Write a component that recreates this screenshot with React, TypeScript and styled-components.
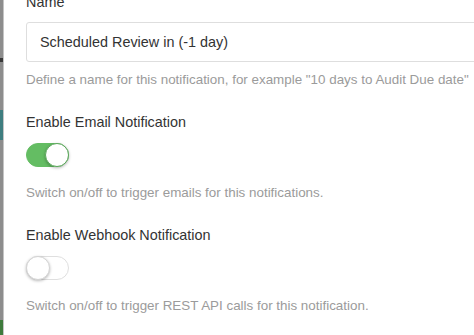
import styled, { createGlobalStyle } from "styled-components"

const GlobalStyle = createGlobalStyle`
    html, body {
        margin: 0;
        padding: 0;
        background: #ffffff;
        overflow: hidden;
    }
    body {
        font-family: "Liberation Sans", Arial, Helvetica, sans-serif;
        -webkit-font-smoothing: antialiased;
    }
`

const Page = styled.div`
    display: flex;
    width: 474px;
    height: 335px;
    overflow: hidden;
`

const Backdrop = styled.div`
    display: flex;
    flex-direction: column;
    width: 3px;
    flex-shrink: 0;
    background: #8d8d8d;
`

const BackdropPatch = styled.div<{ $h: number; $color: string }>`
    height: ${p => p.$h}px;
    flex-shrink: 0;
    background: ${p => p.$color};
`

const Modal = styled.div`
    flex: 1;
    min-width: 0;
    background: #ffffff;
    border-left: 1px solid #c4c4c4;
    padding: 0 0 0 22px;
`

const Form = styled.div`
    display: flex;
    flex-direction: column;
    width: 470px;
    margin-top: -8px;
`

const Group = styled.div`
    display: flex;
    flex-direction: column;
    align-items: flex-start;
    margin-bottom: 23px;
`

const Label = styled.label`
    font-size: 14.4px;
    line-height: 20px;
    color: #333333;
    margin-bottom: 10px;
`

const Input = styled.input`
    box-sizing: border-box;
    width: 100%;
    height: 40px;
    padding: 0 13px;
    border: 1px solid #dedede;
    border-radius: 3px;
    font-family: inherit;
    font-size: 14.4px;
    color: #333333;
    background: #ffffff;
    outline: none;
`

const Help = styled.span<{ $gap: number }>`
    display: block;
    margin-top: ${p => p.$gap}px;
    font-size: 13.4px;
    line-height: 18px;
    color: #9b9b9b;
    white-space: nowrap;
`

const Switch = styled.span<{ $on: boolean }>`
    position: relative;
    display: inline-block;
    box-sizing: border-box;
    width: 43px;
    height: 24px;
    margin-top: 1px;
    border-radius: 12px;
    border: 1px solid ${p => (p.$on ? "#64bd63" : "#dfdfdf")};
    background: ${p => (p.$on ? "#64bd63" : "#ffffff")};
`

const Knob = styled.span<{ $on: boolean }>`
    position: absolute;
    top: -1px;
    left: ${p => (p.$on ? "18px" : "-1px")};
    box-sizing: border-box;
    width: 24px;
    height: 24px;
    border-radius: 50%;
    background: #ffffff;
    border: 1px solid ${p => (p.$on ? "#5aa85a" : "#d4d4d4")};
    box-shadow: 0 1px 3px rgba(0, 0, 0, 0.28);
`

const Toggle = ({ on }: { on: boolean }): JSX.Element => (
    <Switch $on={on}>
        <Knob $on={on} />
    </Switch>
)

const App = (): JSX.Element => {
    return (
        <>
            <GlobalStyle />
            <Page>
                <Backdrop>
                    <BackdropPatch $h={58} $color="#8d8d8d" />
                    <BackdropPatch $h={4} $color="#3a3a3a" />
                    <BackdropPatch $h={48} $color="#8d8d8d" />
                    <BackdropPatch $h={30} $color="#3f7e80" />
                    <BackdropPatch $h={180} $color="#8d8d8d" />
                    <BackdropPatch $h={15} $color="#3e7b3c" />
                </Backdrop>
                <Modal>
                    <Form>
                        <Group>
                            <Label>Name</Label>
                            <Input defaultValue="Scheduled Review in (-1 day)" />
                            <Help $gap={9}>
                                Define a name for this notification, for example "10 days to Audit Due date"
                            </Help>
                        </Group>
                        <Group>
                            <Label>Enable Email Notification</Label>
                            <Toggle on={true} />
                            <Help $gap={17}>Switch on/off to trigger emails for this notifications.</Help>
                        </Group>
                        <Group>
                            <Label>Enable Webhook Notification</Label>
                            <Toggle on={false} />
                            <Help $gap={17}>Switch on/off to trigger REST API calls for this notification.</Help>
                        </Group>
                    </Form>
                </Modal>
            </Page>
        </>
    )
}

export default App
